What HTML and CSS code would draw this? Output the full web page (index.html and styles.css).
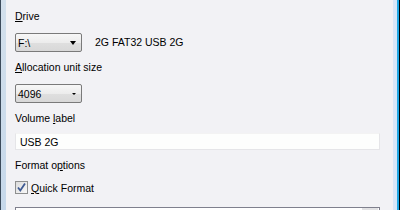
FILE: index.html
```html
<!DOCTYPE html>
<html lang="en">
<head>
    <meta charset="UTF-8">
    <title>Format USB 2G (F:)</title>
    <link rel="stylesheet" href="styles.css">
</head>
<body>
    <div class="ventana">
        <div class="marco-izq"></div>

        <div class="contenido">
            <div class="etiqueta"><u>D</u>rive</div>
            <div class="fila">
                <div class="combo"><span>F:\</span><i class="flecha"></i></div>
                <span class="info">2G FAT32 USB 2G</span>
            </div>

            <div class="etiqueta"><u>A</u>llocation unit size</div>
            <div class="fila">
                <div class="combo"><span>4096</span><i class="flecha chica"></i></div>
            </div>

            <div class="etiqueta">Volume <u>l</u>abel</div>
            <div class="campo">USB 2G</div>

            <div class="etiqueta">Format o<u>p</u>tions</div>
            <label class="opcion">
                <span class="casilla">
                    <svg width="11" height="11" viewBox="0 0 11 11">
                        <path d="M2 5.5 L4.3 8.5 L9 1.5" fill="none" stroke="#3e5a93" stroke-width="1.8"/>
                    </svg>
                </span>
                <span><u>Q</u>uick Format</span>
            </label>

            <!-- barra de progreso / estado -->
            <div class="estado">
                <span>Volume  FAT32  (F:) 2 GB</span>
                <i class="bloque"></i>
            </div>
        </div>

        <div class="marco-der"></div>
    </div>
</body>
</html>
```

FILE: styles.css
```css
body {
    margin: 0;
    padding: 0;
    font-family: "Liberation Sans", Arial, sans-serif;
    font-size: 10.5px;
    color: #000;
}

.ventana {
    display: flex;
    width: 400px;
    height: 210px;
    overflow: hidden;
    background: #f2f2f5;
}

.marco-izq {
    width: 5px;
    border-left: 1px solid #3c4b5b;
    background: linear-gradient(#d3e0ec, #c6d8ea);
}

.marco-der {
    width: 4px;
    background: #d6e6f8;
    border-right: 2px solid #1fa8e6;
    box-shadow: 1px 0 0 #000;
    margin-right: 1px;
}

.contenido {
    flex: 1;
    display: flex;
    flex-direction: column;
    padding: 10px 13px 0 9px;
}

.etiqueta {
    line-height: 13px;
    height: 13px;
}

.fila {
    display: flex;
    align-items: center;
    gap: 13px;
    margin: 10px 0 9px;
}

.combo {
    width: 67px;
    height: 19px;
    box-sizing: border-box;
    border: 1px solid #7a7a7a;
    border-radius: 2px;
    background: linear-gradient(#f7f7f7, #ececec 50%, #dfdfdf 51%, #d8d8d8);
    display: flex;
    align-items: center;
    justify-content: space-between;
    padding: 0 5px 0 2px;
}

.flecha {
    width: 0;
    height: 0;
    border-left: 3.5px solid transparent;
    border-right: 3.5px solid transparent;
    border-top: 4px solid #000;
}

.flecha.chica {
    border-left-width: 2px;
    border-right-width: 2px;
    border-top-width: 2px;
}

.info {
    line-height: 13px;
}

.campo {
    margin: 8px 0 9px;
    height: 19px;
    box-sizing: border-box;
    background: #fdfefd;
    border: 1px solid #e5e5e8;
    border-top-color: #f3f3f3;
    padding: 2px 0 0 4px;
    line-height: 13px;
}

.opcion {
    display: flex;
    align-items: center;
    gap: 3px;
    margin-top: 9px;
    height: 13px;
}

.casilla {
    width: 13px;
    height: 13px;
    box-sizing: border-box;
    border: 1px solid #8e8f8f;
    background: linear-gradient(135deg, #dcdcdc, #f8f8f8);
    display: flex;
    align-items: center;
    justify-content: center;
}

.estado {
    margin-top: 13px;
    height: 20px;
    box-sizing: border-box;
    border: 1px solid #7f808d;
    background: #fff;
    display: flex;
    justify-content: space-between;
    padding: 2px 1px 0 4px;
}

.bloque {
    width: 16px;
    height: 16px;
    background: #e2e2e4;
    margin-top: -2px;
}
```
